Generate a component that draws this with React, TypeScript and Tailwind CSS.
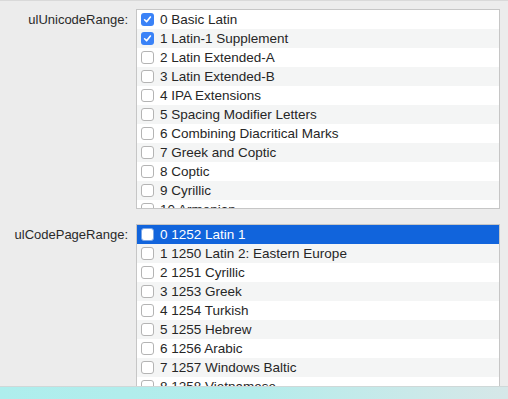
import React from "react";

const unicode = [
  "0 Basic Latin",
  "1 Latin-1 Supplement",
  "2 Latin Extended-A",
  "3 Latin Extended-B",
  "4 IPA Extensions",
  "5 Spacing Modifier Letters",
  "6 Combining Diacritical Marks",
  "7 Greek and Coptic",
  "8 Coptic",
  "9 Cyrillic",
  "10 Armenian",
  "11 Hebrew",
];

const codepages = [
  "0 1252 Latin 1",
  "1 1250 Latin 2: Eastern Europe",
  "2 1251 Cyrillic",
  "3 1253 Greek",
  "4 1254 Turkish",
  "5 1255 Hebrew",
  "6 1256 Arabic",
  "7 1257 Windows Baltic",
  "8 1258 Vietnamese",
  "9 Reserved",
];

function Check({ checked, selected }: { checked: boolean; selected?: boolean }) {
  if (checked) {
    return (
      <span className="flex h-[13px] w-[13px] shrink-0 items-center justify-center rounded-[3px] bg-[#3a82f7]">
        <svg width="9" height="9" viewBox="0 0 9 9">
          <path d="M1.6 4.8 L3.6 6.8 L7.4 2" fill="none" stroke="white" strokeWidth="1.6" strokeLinecap="round" strokeLinejoin="round" />
        </svg>
      </span>
    );
  }
  return (
    <span
      className={
        "h-[13px] w-[13px] shrink-0 rounded-[3px] border bg-white " +
        (selected ? "border-[#7da7e6]" : "border-[#b4b4b4]")
      }
    />
  );
}

function ListBox({
  items,
  checked,
  selected,
  height,
}: {
  items: string[];
  checked: number[];
  selected?: number;
  height: string;
}) {
  return (
    <div className={"w-[364px] shrink-0 overflow-hidden border border-[#c6c6c6] bg-white " + height}>
      {items.map((t, i) => {
        const sel = selected === i;
        const bg = sel ? "bg-[#1164dc] text-white" : i % 2 === 1 ? "bg-[#f4f5f5] text-[#262626]" : "bg-white text-[#262626]";
        return (
          <div key={t} className={"flex h-[19px] items-center gap-[6px] pl-[4px] " + bg}>
            <Check checked={checked.includes(i)} selected={sel} />
            <span className="leading-[19px]">{t}</span>
          </div>
        );
      })}
    </div>
  );
}

export default function App() {
  return (
    <div
      className="flex h-[399px] w-[508px] flex-col overflow-hidden bg-[#ececec] text-[13.5px]"
      style={{ fontFamily: '"Liberation Sans", Arial, sans-serif' }}
    >
      <div className="flex h-[386px] flex-col gap-[15px] overflow-hidden border-t border-[#d9d9d9] pt-[8px]">
        <div className="flex gap-[8px]">
          <div className="w-[128px] shrink-0 pt-[1px] text-right text-[13px] leading-[19px] text-[#2a2a2a]">ulUnicodeRange:</div>
          <ListBox items={unicode} checked={[0, 1]} height="h-[200px]" />
        </div>
        <div className="flex gap-[8px]">
          <div className="w-[128px] shrink-0 pt-[1px] text-right text-[13px] leading-[19px] text-[#2a2a2a]">ulCodePageRange:</div>
          <ListBox items={codepages} checked={[]} selected={0} height="h-[200px]" />
        </div>
      </div>
      <div className="h-[13px] shrink-0 border-t border-[#cfd8d8] bg-gradient-to-r from-[#aeeeed] via-[#b4eceb] to-[#d6e7e8]" />
    </div>
  );
}
